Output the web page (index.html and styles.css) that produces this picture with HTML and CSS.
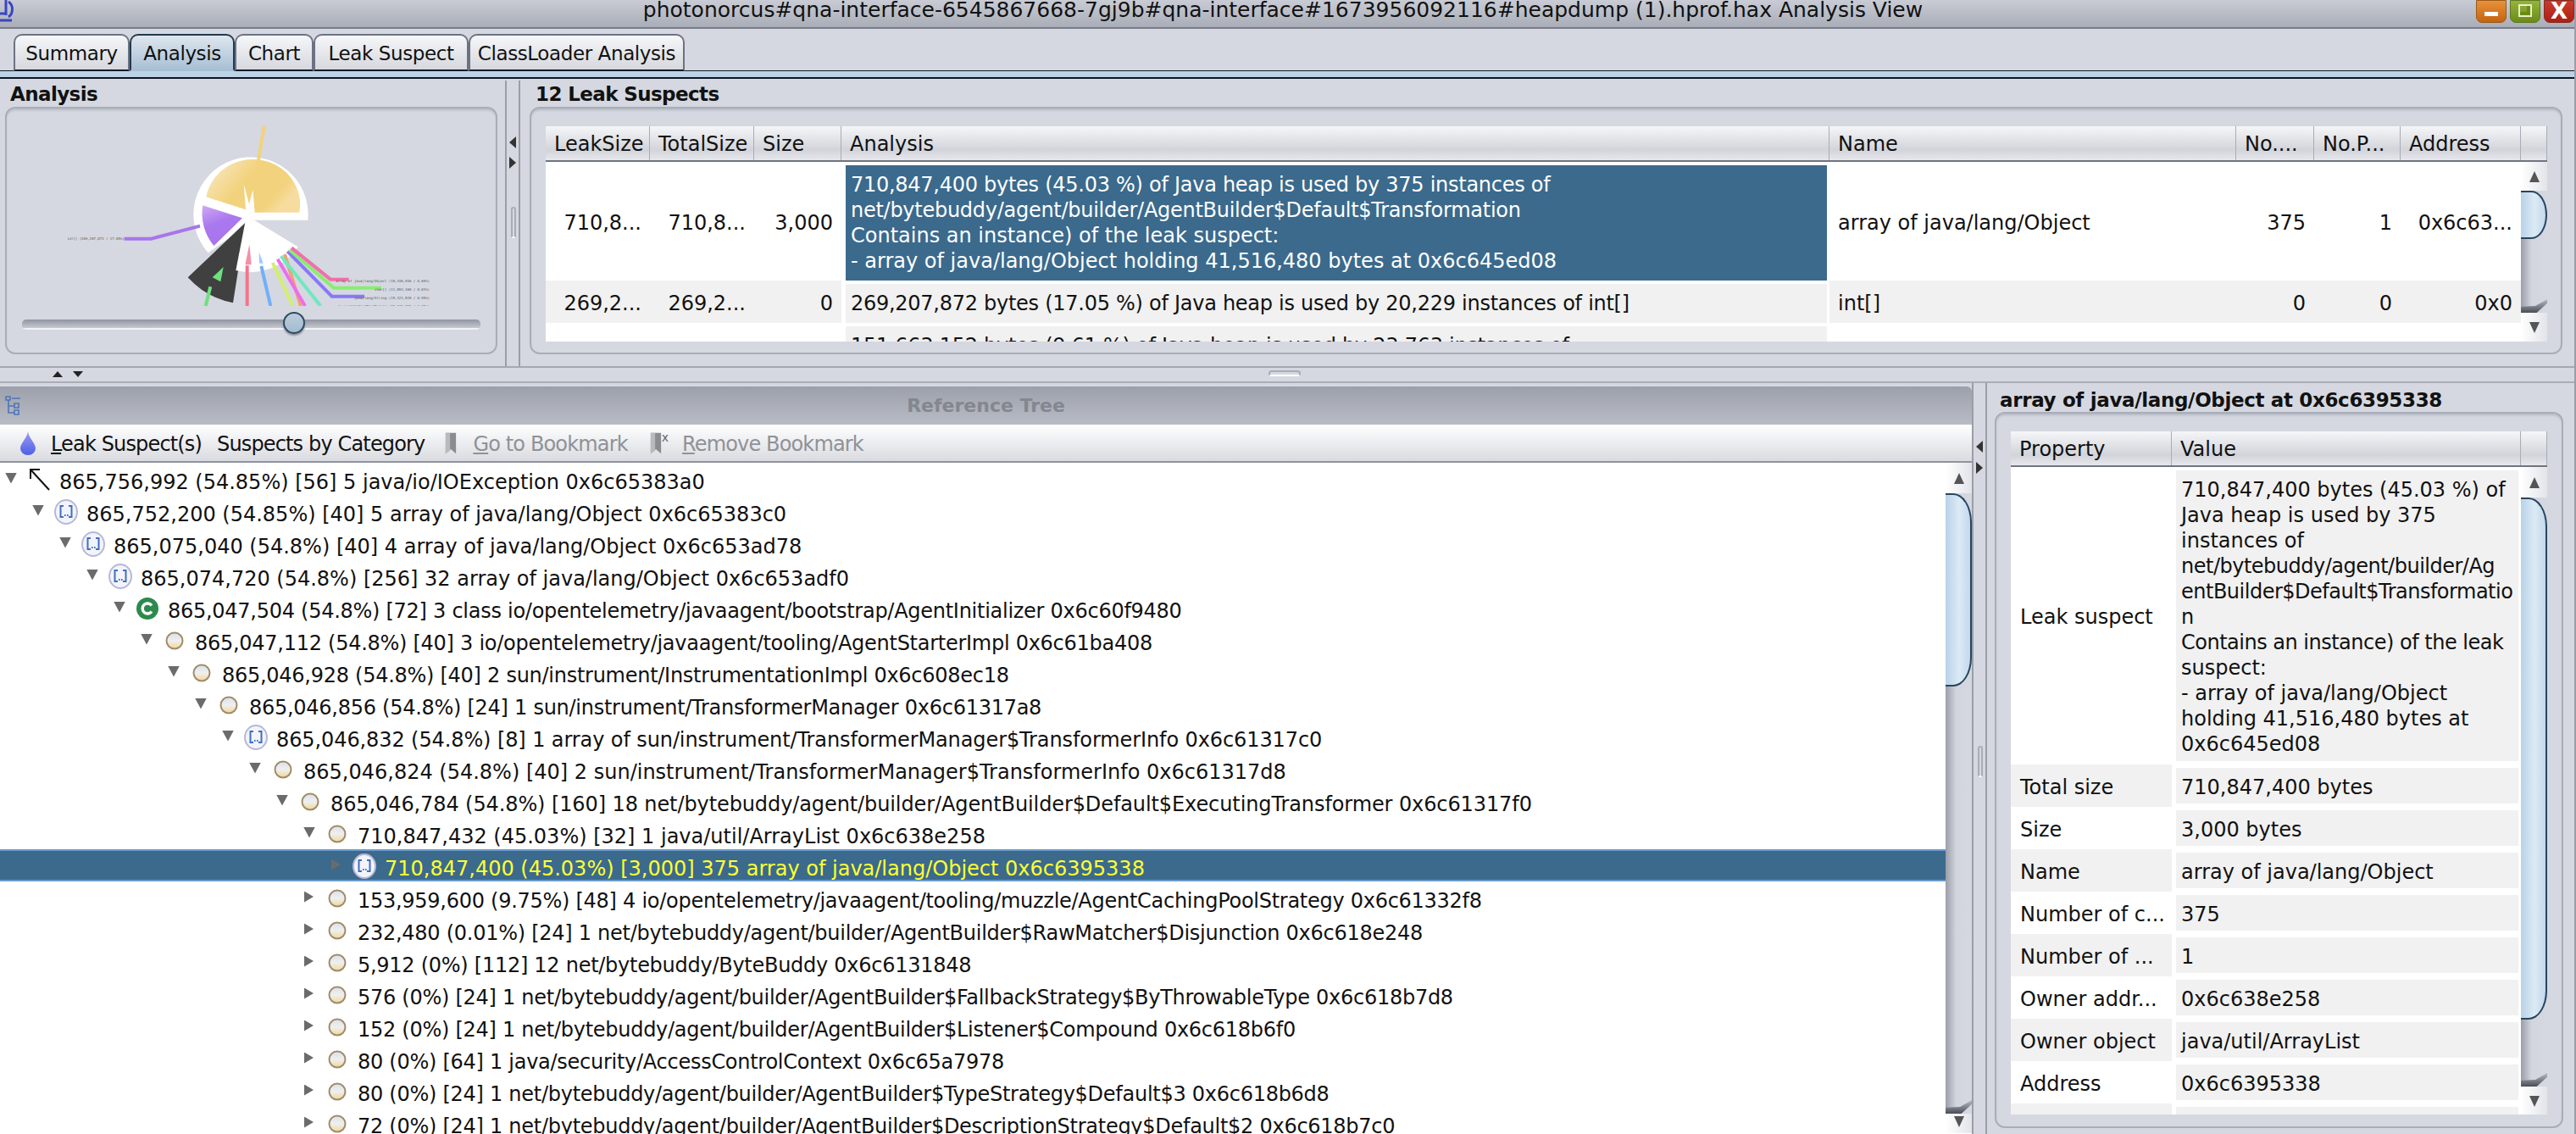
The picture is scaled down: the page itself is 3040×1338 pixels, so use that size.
FILE: index.html
```html
<!DOCTYPE html>
<html lang="en">
<head>
    <meta charset="UTF-8">
    <title>Analysis View</title>
    <link rel="stylesheet" href="styles.css">
</head>
<body>
    <svg class="defs" width="0" height="0">
        <defs>
            <linearGradient id="ballFill" x1="0" y1="0" x2="0" y2="1">
                <stop offset="0" stop-color="#d9e0ee"/>
                <stop offset="0.5" stop-color="#eef0ee"/>
                <stop offset="1" stop-color="#f3d49a"/>
            </linearGradient>
            <linearGradient id="goldFill" x1="0" y1="0" x2="1" y2="0.5">
                <stop offset="0" stop-color="#f9ecd0"/>
                <stop offset="0.5" stop-color="#f2d27c"/>
                <stop offset="0.85" stop-color="#f2d27c"/>
                <stop offset="1" stop-color="#f6dd9f"/>
            </linearGradient>
            <linearGradient id="purpleFill" x1="0" y1="0" x2="0.4" y2="1">
                <stop offset="0" stop-color="#d0aaf4"/>
                <stop offset="0.5" stop-color="#aa78ee"/>
                <stop offset="1" stop-color="#a874ec"/>
            </linearGradient>
            <linearGradient id="dropFill" x1="0" y1="0" x2="0" y2="1">
                <stop offset="0" stop-color="#9a9cf0"/>
                <stop offset="1" stop-color="#4f5fe8"/>
            </linearGradient>
            <symbol id="ball" viewBox="0 0 28 30">
                <ellipse cx="14" cy="15" rx="9.5" ry="9.5" fill="url(#ballFill)" stroke="#a08c66" stroke-width="2"/>
            </symbol>
            <symbol id="array" viewBox="0 0 28 30">
                <ellipse cx="14" cy="15" rx="13" ry="14" fill="#f3f4fb" stroke="#b6b8d8" stroke-width="2"/>
                <path d="M11 8H7.5V21H11M17 8H20.5V21H17" fill="none" stroke="#3f6fc4" stroke-width="2"/>
                <path d="M12 19h1.6M15 19h1.6" stroke="#3f6fc4" stroke-width="2"/>
            </symbol>
            <symbol id="cls" viewBox="0 0 28 30">
                <circle cx="14" cy="15" r="13" fill="#2c8a4c"/>
                <path d="M19 11.5A6 6 0 1 0 19 18.5" fill="none" stroke="#fff" stroke-width="3.4"/>
            </symbol>
            <symbol id="upleft" viewBox="0 0 28 30">
                <path d="M4 2V14M3 3H15M4 3L26 27" fill="none" stroke="#111" stroke-width="2"/>
            </symbol>
            <symbol id="mark" viewBox="0 0 16 30">
                <path d="M1 1H15V29L8 23L1 29Z" fill="#8a8c90"/>
                <path d="M1 1H7V25L1 29Z" fill="#b9babd"/>
            </symbol>
        </defs>
    </svg>

    <div class="app">
        <header class="title-bar">
            <svg class="app-icon" width="20" height="26" viewBox="0 0 20 26">
                <path d="M0 24H14M7 0V18M0 16H7M10 2C16 6 16 16 10 20" fill="none" stroke="#3a46c0" stroke-width="3"/>
            </svg>
            <div class="title-text">photonorcus#qna-interface-6545867668-7gj9b#qna-interface#1673956092116#heapdump (1).hprof.hax Analysis View</div>
            <div class="win-buttons">
                <div class="win-btn win-min"><span class="min-dash"></span></div>
                <div class="win-btn win-max"><span class="max-box"></span></div>
                <div class="win-btn win-close">X</div>
            </div>
        </header>

        <nav class="tab-bar">
            <div class="tab tab-summary">Summary</div>
            <div class="tab tab-analysis tab-active">Analysis</div>
            <div class="tab tab-chart">Chart</div>
            <div class="tab tab-leak">Leak Suspect</div>
            <div class="tab tab-loader">ClassLoader Analysis</div>
        </nav>
        <div class="tab-band"></div>

        <section class="top-split">
            <div class="chart-pane">
                <h2 class="pane-title">Analysis</h2>
                <div class="group-box chart-box">
                    <svg class="pie" width="440" height="232" viewBox="-60 0 1320 696">
                        <path d="M598 392H790A203 203 0 1 0 437 508L598 392Z" fill="#fff"/>
                        <path d="M602 365H760A165 158 0 0 0 430 310L570 355L563 265L582 335L595 285Z" fill="url(#goldFill)"/>
                        <path d="M418 340L558 385L457 483A178 178 0 0 1 418 340Z" fill="url(#purpleFill)"/>
                        <path d="M570 400L365 595A290 290 0 0 0 525 685Z" fill="#404040"/>
                        <path d="M568 400L600 392L755 487A205 205 0 0 1 535 570Z" fill="#fff"/>
                        <path d="M583 478L568 550H590Z" fill="#f78fa5"/>
                        <path d="M617 505L618 545H632Z" fill="#9fc9ff"/>
                        <path d="M491 558L452 595L481 610Z" fill="#6fe07f"/>
                        <g fill="none" stroke-width="12">
                            <path d="M612 198L635 60" stroke="#f2d27c"/>
                            <path d="M408 413L235 458H140" stroke="#a875ec"/>
                            <path d="M445 628L428 696" stroke="#6fe07f"/>
                            <path d="M575 553V696" stroke="#f2748b"/>
                            <path d="M625 555L658 696" stroke="#6fb0fa"/>
                            <path d="M708 513L765 696" stroke="#f0a070"/>
                            <path d="M665 543L737 696" stroke="#d4ee6c"/>
                            <path d="M683 530L780 696" stroke="#ee6cee"/>
                            <path d="M695 520L835 696" stroke="#6ee8c0"/>
                            <path d="M718 503L875 662H990" stroke="#8878f8"/>
                            <path d="M725 497L882 632H1050" stroke="#88ee70"/>
                            <path d="M732 490L870 602H935" stroke="#f070a8"/>
                        </g>
                        <g class="pie-labels">
                            <text x="140" y="462">int[] (269,207,872 / 17.05%)</text>
                            <text x="1221" y="612">array of java/lang/Object (10,336,936 / 0.65%)</text>
                            <text x="1221" y="642">char[] (11,893,160 / 0.83%)</text>
                            <text x="1221" y="672">java/lang/String (15,121,520 / 0.95%)</text>
                            <text x="1221" y="702">java/util/HashMap$Node[] (15,043,280 / 0.95%)</text>
                        </g>
                    </svg>
                    <div class="slider">
                        <div class="slider-thumb"></div>
                    </div>
                </div>
            </div>

            <div class="v-splitter">
                <span class="arrow-left"></span>
                <span class="arrow-right"></span>
                <span class="grip"></span>
            </div>

            <div class="suspects-pane">
                <h2 class="pane-title">12 Leak Suspects</h2>
                <div class="group-box suspects-box">
                    <div class="grid-table suspects-table">
                        <div class="thead suspects-cols">
                            <div>LeakSize</div>
                            <div>TotalSize</div>
                            <div>Size</div>
                            <div>Analysis</div>
                            <div>Name</div>
                            <div>No....</div>
                            <div>No.P...</div>
                            <div>Address</div>
                            <div></div>
                        </div>
                        <div class="tbody">
                            <div class="rows">
                                <div class="trow suspects-cols row-tall">
                                    <div class="num">710,8...</div>
                                    <div class="num">710,8...</div>
                                    <div class="num">3,000</div>
                                    <div class="wrap-cell"><div class="wrap-inner is-selected"><span class="tight">710,847,400 bytes (45.03 %) of Java heap is used by 375 instances of</span><br><span class="tight">net/bytebuddy/agent/builder/AgentBuilder$Default$Transformation</span><br>Contains an instance) of the leak suspect:<br>- array of java/lang/Object holding 41,516,480 bytes at 0x6c645ed08</div></div>
                                    <div class="txt">array of java/lang/Object</div>
                                    <div class="num">375</div>
                                    <div class="num">1</div>
                                    <div class="num">0x6c63...</div>
                                </div>
                                <div class="trow suspects-cols row-alt">
                                    <div class="num">269,2...</div>
                                    <div class="num">269,2...</div>
                                    <div class="num">0</div>
                                    <div class="wrap-cell"><div class="wrap-inner tight">269,207,872 bytes (17.05 %) of Java heap is used by 20,229 instances of int[]</div></div>
                                    <div class="txt">int[]</div>
                                    <div class="num">0</div>
                                    <div class="num">0</div>
                                    <div class="num">0x0</div>
                                </div>
                                <div class="trow suspects-cols">
                                    <div></div>
                                    <div></div>
                                    <div></div>
                                    <div class="wrap-cell"><div class="wrap-inner tight">151,663,152 bytes (9.61 %) of Java heap is used by 23,763 instances of</div></div>
                                    <div></div>
                                    <div></div>
                                    <div></div>
                                    <div></div>
                                </div>
                            </div>
                            <div class="vscroll sb-suspects">
                                <div class="sb-up"><span class="tri-up"></span></div>
                                <div class="sb-thumb"></div>
                                <div class="sb-space"></div>
                                <div class="sb-curl"></div>
                                <div class="sb-down"><span class="tri-down"></span></div>
                            </div>
                        </div>
                    </div>
                </div>
            </div>
        </section>

        <div class="h-splitter">
            <span class="tri-up small"></span>
            <span class="tri-down small"></span>
            <span class="h-grip"></span>
        </div>

        <section class="bottom-split">
            <div class="tree-pane">
                <div class="tree-head">
                    <svg class="tree-icon" width="20" height="24" viewBox="0 0 20 24">
                        <path d="M4 5V20H11M4 12H11M8 3H18" fill="none" stroke="#4f74b8" stroke-width="1.6"/>
                        <path d="M1 1h5v4H1zM11 9h5v5h-5zM11 17h5v5h-5z" fill="none" stroke="#4f74b8" stroke-width="1.6"/>
                    </svg>
                    <span class="tree-title">Reference Tree</span>
                </div>
                <div class="toolbar">
                    <svg class="drop" width="20" height="28" viewBox="0 0 20 28">
                        <path d="M10 0C11 8 19 14 19 20A9 8 0 0 1 1 20C1 14 9 8 10 0Z" fill="url(#dropFill)"/>
                    </svg>
                    <span class="tool tool-first"><u>L</u>eak Suspect(s)</span>
                    <span class="tool tool-cat">Suspects by Category</span>
                    <svg class="mark" width="14" height="28"><use href="#mark"/></svg>
                    <span class="tool tool-off"><u>G</u>o to Bookmark</span>
                    <svg class="mark mark-x" width="14" height="28"><use href="#mark"/></svg>
                    <span class="mark-cross">x</span>
                    <span class="tool tool-off tool-remove"><u>R</u>emove Bookmark</span>
                </div>
                <div class="tree-body">
                    <ul class="tree">
                        <li class="node d0"><i class="tw open"></i><svg class="ico"><use href="#upleft"/></svg><span>865,756,992 (54.85%) [56] 5 java/io/IOException 0x6c65383a0</span></li>
                        <li class="node d1"><i class="tw open"></i><svg class="ico"><use href="#array"/></svg><span>865,752,200 (54.85%) [40] 5 array of java/lang/Object 0x6c65383c0</span></li>
                        <li class="node d2"><i class="tw open"></i><svg class="ico"><use href="#array"/></svg><span>865,075,040 (54.8%) [40] 4 array of java/lang/Object 0x6c653ad78</span></li>
                        <li class="node d3"><i class="tw open"></i><svg class="ico"><use href="#array"/></svg><span>865,074,720 (54.8%) [256] 32 array of java/lang/Object 0x6c653adf0</span></li>
                        <li class="node d4 tight"><i class="tw open"></i><svg class="ico"><use href="#cls"/></svg><span>865,047,504 (54.8%) [72] 3 class io/opentelemetry/javaagent/bootstrap/AgentInitializer 0x6c60f9480</span></li>
                        <li class="node d5 tight"><i class="tw open"></i><svg class="ico"><use href="#ball"/></svg><span>865,047,112 (54.8%) [40] 3 io/opentelemetry/javaagent/tooling/AgentStarterImpl 0x6c61ba408</span></li>
                        <li class="node d6 tight"><i class="tw open"></i><svg class="ico"><use href="#ball"/></svg><span>865,046,928 (54.8%) [40] 2 sun/instrument/InstrumentationImpl 0x6c608ec18</span></li>
                        <li class="node d7 tight"><i class="tw open"></i><svg class="ico"><use href="#ball"/></svg><span>865,046,856 (54.8%) [24] 1 sun/instrument/TransformerManager 0x6c61317a8</span></li>
                        <li class="node d8 slim"><i class="tw open"></i><svg class="ico"><use href="#array"/></svg><span>865,046,832 (54.8%) [8] 1 array of sun/instrument/TransformerManager$TransformerInfo 0x6c61317c0</span></li>
                        <li class="node d9"><i class="tw open"></i><svg class="ico"><use href="#ball"/></svg><span>865,046,824 (54.8%) [40] 2 sun/instrument/TransformerManager$TransformerInfo 0x6c61317d8</span></li>
                        <li class="node d10 slim"><i class="tw open"></i><svg class="ico"><use href="#ball"/></svg><span>865,046,784 (54.8%) [160] 18 net/bytebuddy/agent/builder/AgentBuilder$Default$ExecutingTransformer 0x6c61317f0</span></li>
                        <li class="node d11"><i class="tw open"></i><svg class="ico"><use href="#ball"/></svg><span>710,847,432 (45.03%) [32] 1 java/util/ArrayList 0x6c638e258</span></li>
                        <li class="node d12 node-selected"><i class="tw"></i><svg class="ico"><use href="#array"/></svg><span>710,847,400 (45.03%) [3,000] 375 array of java/lang/Object 0x6c6395338</span></li>
                        <li class="node d11 tight"><i class="tw"></i><svg class="ico"><use href="#ball"/></svg><span>153,959,600 (9.75%) [48] 4 io/opentelemetry/javaagent/tooling/muzzle/AgentCachingPoolStrategy 0x6c61332f8</span></li>
                        <li class="node d11 tight"><i class="tw"></i><svg class="ico"><use href="#ball"/></svg><span>232,480 (0.01%) [24] 1 net/bytebuddy/agent/builder/AgentBuilder$RawMatcher$Disjunction 0x6c618e248</span></li>
                        <li class="node d11 tight"><i class="tw"></i><svg class="ico"><use href="#ball"/></svg><span>5,912 (0%) [112] 12 net/bytebuddy/ByteBuddy 0x6c6131848</span></li>
                        <li class="node d11 tight"><i class="tw"></i><svg class="ico"><use href="#ball"/></svg><span>576 (0%) [24] 1 net/bytebuddy/agent/builder/AgentBuilder$FallbackStrategy$ByThrowableType 0x6c618b7d8</span></li>
                        <li class="node d11 tight"><i class="tw"></i><svg class="ico"><use href="#ball"/></svg><span>152 (0%) [24] 1 net/bytebuddy/agent/builder/AgentBuilder$Listener$Compound 0x6c618b6f0</span></li>
                        <li class="node d11 tight"><i class="tw"></i><svg class="ico"><use href="#ball"/></svg><span>80 (0%) [64] 1 java/security/AccessControlContext 0x6c65a7978</span></li>
                        <li class="node d11 tight"><i class="tw"></i><svg class="ico"><use href="#ball"/></svg><span>80 (0%) [24] 1 net/bytebuddy/agent/builder/AgentBuilder$TypeStrategy$Default$3 0x6c618b6d8</span></li>
                        <li class="node d11 tight"><i class="tw"></i><svg class="ico"><use href="#ball"/></svg><span>72 (0%) [24] 1 net/bytebuddy/agent/builder/AgentBuilder$DescriptionStrategy$Default$2 0x6c618b7c0</span></li>
                    </ul>
                    <div class="vscroll sb-tree">
                        <div class="sb-up"><span class="tri-up"></span></div>
                        <div class="sb-thumb"></div>
                        <div class="sb-space"></div>
                        <div class="sb-curl"></div>
                        <div class="sb-down"><span class="tri-down"></span></div>
                    </div>
                </div>
            </div>

            <div class="v-splitter v-splitter-low">
                <span class="arrow-left"></span>
                <span class="arrow-right"></span>
                <span class="grip"></span>
            </div>

            <div class="props-pane">
                <h2 class="pane-title">array of java/lang/Object at 0x6c6395338</h2>
                <div class="group-box props-box">
                    <div class="grid-table props-table">
                        <div class="thead props-cols">
                            <div>Property</div>
                            <div>Value</div>
                            <div></div>
                        </div>
                        <div class="tbody">
                            <div class="rows">
                                <div class="trow props-cols row-leak">
                                    <div class="txt">Leak suspect</div>
                                    <div class="wrap-cell"><div class="wrap-inner">710,847,400 bytes (45.03 %) of<br>Java heap is used by 375<br>instances of<br><span class="tighter">net/bytebuddy/agent/builder/Ag</span><br><span class="tighter">entBuilder$Default$Transformatio</span><br>n<br><span class="tighter">Contains an instance) of the leak</span><br>suspect:<br>- array of java/lang/Object<br>holding 41,516,480 bytes at<br>0x6c645ed08</div></div>
                                </div>
                                <div class="trow props-cols row-alt">
                                    <div class="txt">Total size</div>
                                    <div class="wrap-cell"><div class="wrap-inner">710,847,400 bytes</div></div>
                                </div>
                                <div class="trow props-cols">
                                    <div class="txt">Size</div>
                                    <div class="wrap-cell"><div class="wrap-inner">3,000 bytes</div></div>
                                </div>
                                <div class="trow props-cols row-alt">
                                    <div class="txt">Name</div>
                                    <div class="wrap-cell"><div class="wrap-inner">array of java/lang/Object</div></div>
                                </div>
                                <div class="trow props-cols">
                                    <div class="txt">Number of c...</div>
                                    <div class="wrap-cell"><div class="wrap-inner">375</div></div>
                                </div>
                                <div class="trow props-cols row-alt">
                                    <div class="txt">Number of ...</div>
                                    <div class="wrap-cell"><div class="wrap-inner">1</div></div>
                                </div>
                                <div class="trow props-cols">
                                    <div class="txt">Owner addr...</div>
                                    <div class="wrap-cell"><div class="wrap-inner">0x6c638e258</div></div>
                                </div>
                                <div class="trow props-cols row-alt">
                                    <div class="txt">Owner object</div>
                                    <div class="wrap-cell"><div class="wrap-inner">java/util/ArrayList</div></div>
                                </div>
                                <div class="trow props-cols">
                                    <div class="txt">Address</div>
                                    <div class="wrap-cell"><div class="wrap-inner">0x6c6395338</div></div>
                                </div>
                                <div class="trow props-cols row-alt">
                                    <div class="txt"></div>
                                    <div class="wrap-cell"><div class="wrap-inner"></div></div>
                                </div>
                            </div>
                            <div class="vscroll sb-props">
                                <div class="sb-up"><span class="tri-up"></span></div>
                                <div class="sb-thumb"></div>
                                <div class="sb-space"></div>
                                <div class="sb-curl"></div>
                                <div class="sb-down"><span class="tri-down"></span></div>
                            </div>
                        </div>
                    </div>
                </div>
            </div>
        </section>
    </div>
</body>
</html>
```

FILE: styles.css
```css
* {
    box-sizing: border-box;
}
html, body {
    margin: 0;
    padding: 0;
    height: 100%;
    overflow: hidden;
}
body {
    font-family: "DejaVu Sans", sans-serif;
    font-size: 24px;
    color: #111;
    background-color: #d5d8e0;
}
.defs {
    position: absolute;
}
.slim {
    letter-spacing: -0.1px;
}
.tight {
    letter-spacing: -0.27px;
}
.tighter {
    letter-spacing: -0.5px;
}
.app {
    width: 3040px;
    height: 1338px;
    overflow: hidden;
    display: flex;
    flex-direction: column;
    border-right: 2px solid #9a9ea8;
}

/* title bar */
.title-bar {
    height: 34px;
    flex: none;
    display: grid;
    grid-template-columns: 120px 1fr 120px;
    background: linear-gradient(#c9ccd5, #a9adb7);
    border-bottom: 2px solid #777c89;
    overflow: hidden;
}
.app-icon {
    display: block;
}
.title-text {
    text-align: center;
    font-size: 25px;
    line-height: 24px;
    padding-right: 10px;
    white-space: nowrap;
}
.win-buttons {
    display: flex;
    gap: 4px;
    justify-content: flex-end;
}
.win-btn {
    width: 36px;
    height: 27px;
    border-radius: 0 0 7px 7px;
    color: #fff;
    text-align: center;
    font-size: 26px;
    font-weight: bold;
    line-height: 24px;
}
.win-min {
    background: linear-gradient(#e8923a, #c46410);
    border: 1px solid #9a5a1c;
}
.win-max {
    background: linear-gradient(#96b43c, #6a8c16);
    border: 1px solid #5f7a20;
}
.win-close {
    background: linear-gradient(#cc3a2c, #a82016);
    border: 1px solid #8a2a20;
}
.min-dash {
    display: block;
    width: 16px;
    height: 5px;
    background: #fff;
    margin: 13px auto 0;
}
.max-box {
    display: block;
    width: 16px;
    height: 15px;
    margin: 4px auto 0;
    border: 2px solid #e8efc8;
    box-shadow: inset -4px -4px 0 #6a8c16;
}

/* tabs */
.tab-bar {
    height: 50px;
    flex: none;
    display: flex;
    align-items: flex-end;
    padding-left: 16px;
    border-bottom: 1px solid #12182a;
}
.tab {
    height: 44px;
    margin-bottom: -1px;
    font-size: 23px;
    letter-spacing: -0.4px;
    line-height: 43px;
    text-align: center;
    border: 2px solid #6c7282;
    border-bottom-color: #12182a;
    border-radius: 10px 10px 0 0;
    background: linear-gradient(#f6f7f9, #d6d8de);
    white-space: nowrap;
}
.tab-summary { width: 137px; }
.tab-analysis { width: 124px; }
.tab-chart { width: 93px; }
.tab-leak { width: 183px; }
.tab-loader { width: 255px; }
.tab-active {
    border-color: #1f3a50;
    background: linear-gradient(#dfe6ee, #a8c0d5);
    border-bottom-color: #a8c0d5;
}
.tab-band {
    height: 9px;
    flex: none;
    background: #bcd3e6;
    border-bottom: 2px solid #0e1424;
}

/* top split */
.top-split {
    height: 341px;
    flex: none;
    display: flex;
    border-bottom: 2px solid #a4a8b2;
}
.pane-title {
    height: 33px;
    margin: 0;
    padding-left: 12px;
    font-size: 23px;
    letter-spacing: -0.6px;
    line-height: 37px;
    white-space: nowrap;
}
.group-box {
    border: 2px solid #a9adb7;
    border-radius: 12px;
    box-shadow: inset 0 3px 3px -1px #b4b8c2;
    background: #d5d8e0;
}
.chart-pane {
    width: 596px;
    flex: none;
}
.chart-box {
    position: relative;
    width: 581px;
    height: 292px;
    margin-left: 6px;
    padding-top: 1px;
}
.pie {
    display: block;
    margin-left: 72px;
}
.pie-labels text {
    font-family: "DejaVu Sans Mono", monospace;
    font-size: 12px;
    fill: #555;
    text-anchor: end;
}
.slider {
    position: relative;
    width: 541px;
    height: 12px;
    margin: 16px 0 0 18px;
    border-radius: 5px;
    background: linear-gradient(#8f94a0, #c4c7d0 80%, #f2f3f6 80%);
}
.slider-thumb {
    position: absolute;
    left: 308px;
    top: -9px;
    width: 26px;
    height: 26px;
    border-radius: 50%;
    border: 2px solid #2f4a5e;
    background: linear-gradient(#bccddd, #a3bbd0);
    box-shadow: 0 2px 2px #8f94a0;
}

/* vertical splitter */
.v-splitter {
    width: 18px;
    flex: none;
    margin-top: 2px;
    position: relative;
    border-left: 2px solid #9a9ea8;
    border-right: 2px solid #9a9ea8;
}
.arrow-left, .arrow-right {
    position: absolute;
    left: 3px;
    width: 0;
    height: 0;
    border-top: 7px solid transparent;
    border-bottom: 7px solid transparent;
}
.arrow-left {
    top: 66px;
    border-right: 8px solid #333;
}
.arrow-right {
    top: 90px;
    border-left: 8px solid #333;
}
.grip {
    position: absolute;
    left: 5px;
    top: 149px;
    width: 6px;
    height: 37px;
    border: 2px solid #a9adb7;
    border-radius: 3px;
    border-bottom-color: #fff;
}
.v-splitter-low {
    margin-top: 0;
}
.v-splitter-low .arrow-left {
    top: 68px;
}
.v-splitter-low .arrow-right {
    top: 93px;
}
.v-splitter-low .grip {
    top: 428px;
}

.suspects-pane {
    flex: 1;
    min-width: 0;
}
.suspects-pane .pane-title {
    padding-left: 18px;
}
.suspects-box {
    width: 2399px;
    height: 292px;
    margin-left: 11px;
    padding: 21px 0 0 17px;
}

/* tables */
.grid-table {
    background: #fff;
    overflow: hidden;
}
.suspects-table {
    width: 2362px;
    height: 254px;
}
.props-table {
    width: 633px;
    height: 806px;
}
.thead {
    height: 42px;
    background: linear-gradient(#f5f6f8, #d2d4da 70%, #e6e8ee);
    border-bottom: 2px solid #6f7480;
    line-height: 42px;
}
.thead > div {
    padding-left: 10px;
    border-right: 1px solid #a8acb5;
    white-space: nowrap;
    overflow: hidden;
}
.suspects-cols {
    display: grid;
    grid-template-columns: 123px 123px 103px 1166px 480px 92px 102px 142px 31px;
}
.props-cols {
    display: grid;
    grid-template-columns: 190px 412px 31px;
}
.tbody {
    display: flex;
}
.rows {
    flex: 1;
    min-width: 0;
}
.trow {
    height: 50px;
    line-height: 54px;
    white-space: nowrap;
}
.row-alt {
    background: #f1f1f1;
}
.row-tall {
    height: 140px;
    line-height: 144px;
}
.row-leak {
    height: 351px;
    line-height: 355px;
}
.num {
    text-align: right;
    padding-right: 10px;
}
.txt {
    padding-left: 10px;
    overflow: hidden;
}
.wrap-cell {
    background: #fff;
    padding: 4px 3px 4px 5px;
    height: 100%;
}
.wrap-inner {
    height: 100%;
    background: #f1f1f1;
    padding: 8px 6px 0;
    line-height: 30px;
    white-space: nowrap;
    overflow: hidden;
}
.is-selected {
    background: #3b6a8d;
    color: #fff;
}
.props-table .txt {
    padding-left: 11px;
}

/* scrollbars */
.vscroll {
    flex: none;
    width: 31px;
    display: flex;
    flex-direction: column;
    background: linear-gradient(90deg, #9a9ea8, #d2d5dd 40%, #d5d8e0);
}
.sb-up, .sb-down {
    flex: none;
    display: flex;
    justify-content: center;
    align-items: center;
    background: linear-gradient(90deg, #ffffff, #e2e4ea);
}
.sb-thumb {
    flex: none;
    border: 2px solid #27455f;
    border-left: none;
    border-radius: 0 22px 22px 0 / 0 34px 34px 0;
    background: linear-gradient(90deg, #b8d2e8, #dceaf5 55%, #c2d9ec);
}
.sb-space {
    flex: 1;
}
.sb-curl {
    flex: none;
    height: 16px;
    background: linear-gradient(#b8bcc5, #4a4d55);
    clip-path: polygon(0 55%, 55% 50%, 100% 0, 100% 30%, 60% 100%, 0 100%);
}
.tri-up, .tri-down {
    width: 0;
    height: 0;
    border-left: 6px solid transparent;
    border-right: 6px solid transparent;
}
.tri-up {
    border-bottom: 13px solid #555;
}
.tri-down {
    border-top: 13px solid #555;
}
.sb-suspects {
    height: 212px;
}
.sb-suspects .sb-up {
    height: 34px;
}
.sb-suspects .sb-thumb {
    height: 57px;
}
.sb-suspects .sb-down {
    height: 34px;
}
.sb-props {
    height: 765px;
}
.sb-props .sb-up {
    height: 36px;
}
.sb-props .sb-thumb {
    height: 616px;
}
.sb-props .sb-down {
    height: 34px;
}
.sb-tree {
    height: 791px;
}
.sb-tree .sb-up {
    height: 36px;
}
.sb-tree .sb-thumb {
    height: 228px;
}
.sb-tree .sb-down {
    height: 23px;
    align-items: flex-start;
    padding-top: 3px;
}

/* horizontal splitter */
.h-splitter {
    position: relative;
    height: 18px;
    flex: none;
    display: flex;
    gap: 12px;
    padding: 4px 0 0 62px;
    border-bottom: 2px solid #a9adb7;
}
.tri-up.small {
    border-bottom-width: 7px;
    border-bottom-color: #222;
}
.tri-down.small {
    border-top-width: 7px;
    border-top-color: #222;
}
.h-grip {
    position: absolute;
    left: 1497px;
    top: 3px;
    width: 38px;
    height: 7px;
    border: 2px solid #a9adb7;
    border-bottom-color: #fff;
    border-radius: 4px;
}

/* bottom split */
.bottom-split {
    flex: 1;
    min-height: 0;
    display: flex;
}
.tree-pane {
    width: 2327px;
    flex: none;
    margin-top: 4px;
    display: flex;
    flex-direction: column;
    min-height: 0;
}
.tree-head {
    height: 45px;
    flex: none;
    display: flex;
    align-items: center;
    justify-content: center;
    position: relative;
    background: linear-gradient(#9ca0ab, #b9bcc5);
    border-radius: 0 6px 0 0;
}
.tree-icon {
    position: absolute;
    left: 6px;
    top: 11px;
}
.tree-title {
    font-weight: bold;
    color: #83878f;
    font-size: 22px;
}
.toolbar {
    height: 45px;
    flex: none;
    display: flex;
    align-items: center;
    background: linear-gradient(#ffffff, #d9dbe0);
    border-bottom: 2px solid #8f939d;
}
.drop {
    margin-left: 23px;
}
.tool {
    white-space: nowrap;
    letter-spacing: -0.85px;
    padding-top: 3px;
}
.tool-first {
    margin-left: 17px;
}
.tool-cat {
    margin-left: 18px;
}
.mark {
    margin-left: 24px;
}
.tool-off {
    color: #8f9297;
    margin-left: 19px;
}
.mark-x {
    margin-left: 26px;
}
.mark-cross {
    font-size: 14px;
    color: #666;
    line-height: 14px;
    margin-top: -14px;
}
.tool-remove {
    margin-left: 16px;
}

/* tree */
.tree-body {
    flex: 1;
    min-height: 0;
    display: flex;
    background: #fff;
}
.tree {
    flex: 1;
    min-width: 0;
    margin: 0;
    padding: 0;
    list-style: none;
    overflow: hidden;
}
.node {
    height: 38px;
    display: flex;
    align-items: center;
    white-space: nowrap;
    line-height: 38px;
}
.node span {
    position: relative;
    top: 4px;
}
.node-selected {
    background: #3b6a8d;
    border-top: 2px solid #6b9bcc;
    border-bottom: 2px solid #6b9bcc;
    color: #ffff33;
}
.d0 { padding-left: 5px; }
.d1 { padding-left: 37px; }
.d2 { padding-left: 69px; }
.d3 { padding-left: 101px; }
.d4 { padding-left: 133px; }
.d5 { padding-left: 165px; }
.d6 { padding-left: 197px; }
.d7 { padding-left: 229px; }
.d8 { padding-left: 261px; }
.d9 { padding-left: 293px; }
.d10 { padding-left: 325px; }
.d11 { padding-left: 357px; }
.d12 { padding-left: 389px; }
.tw {
    flex: none;
    width: 16px;
    margin-right: 11px;
    position: relative;
    top: -1px;
    height: 13px;
    background: #6b6b6b;
    clip-path: polygon(2px 0, 13px 6.5px, 2px 13px);
}
.tw.open {
    clip-path: polygon(1px 0, 15px 0, 8px 13px);
}
.ico {
    flex: none;
    width: 28px;
    height: 30px;
    margin-right: 10px;
    position: relative;
    top: 1px;
}

/* properties */
.props-pane {
    flex: 1;
    min-width: 0;
    padding-left: 9px;
}
.props-pane .pane-title {
    height: 34px;
    padding-left: 6px;
    letter-spacing: -0.35px;
    line-height: 40px;
}
.props-box {
    width: 671px;
    height: 845px;
    padding: 21px 0 0 17px;
}
```
